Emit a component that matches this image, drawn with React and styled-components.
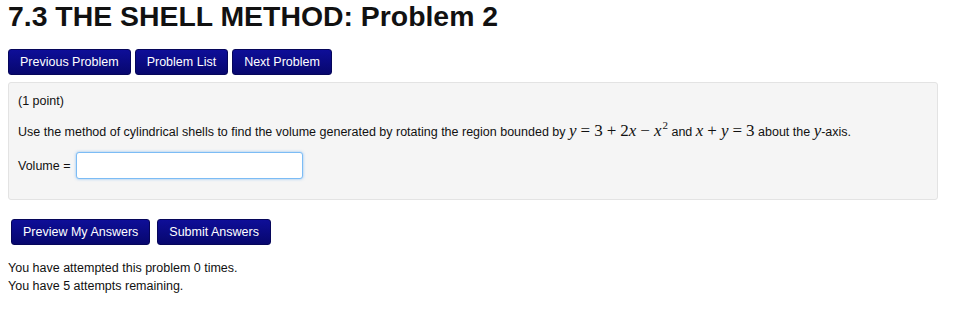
import React from 'react'
import styled, { createGlobalStyle } from 'styled-components'

const Global = createGlobalStyle`
  body {
    margin: 0;
    background: #fff;
    font-family: "Liberation Sans", Arial, sans-serif;
    color: #111;
  }
`

const Page = styled.div`
  padding: 0 15px 0 8px;
`

const Title = styled.h2`
  margin: 0;
  padding-top: 1px;
  font-size: 28.4px;
  line-height: 30px;
  font-weight: bold;
  color: #111;
`

const NavRow = styled.div`
  display: flex;
  gap: 4px;
  margin-top: 18px;
`

const Button = styled.button`
  height: 26px;
  padding: 0 11px;
  border: 1px solid #06065a;
  border-radius: 3px;
  background: linear-gradient(#0e0e98, #07076e);
  color: #fff;
  font-family: "Liberation Sans", Arial, sans-serif;
  font-size: 12.5px;
  cursor: pointer;
`

const Well = styled.div`
  margin-top: 7px;
  padding: 9px 9px 20px;
  background: #f5f5f5;
  border: 1px solid #e3e3e3;
  border-radius: 3px;
  font-size: 12.5px;
  line-height: 18px;
`

const Para = styled.p`
  margin: 0 0 ${p => p.gap || 12}px;
`

const MathVar = styled.span`
  font-family: "Liberation Serif", "Times New Roman", serif;
  font-style: ${p => (p.upright ? 'normal' : 'italic')};
  font-size: 17px;
`

const Op = styled.span`
  font-family: "Liberation Serif", "Times New Roman", serif;
  font-size: 17px;
  margin: 0 4px;
`

const Sup = styled.sup`
  font-family: "Liberation Serif", "Times New Roman", serif;
  font-size: 11px;
  vertical-align: 7px;
  line-height: 0;
  margin-left: 1px;
`

const AnswerRow = styled.div`
  display: flex;
  align-items: center;
  gap: 6px;
`

const Input = styled.input`
  width: 227px;
  height: 27px;
  box-sizing: border-box;
  border: 1px solid #7cbcf5;
  border-radius: 3px;
  box-shadow: 0 0 3px rgba(100, 170, 240, 0.7);
  background: #fff;
  outline: none;
`

const SubmitRow = styled.div`
  display: flex;
  gap: 7px;
  margin: 19px 0 0 3px;
`

const Status = styled.div`
  margin-top: 14px;
  font-size: 12.5px;
  line-height: 18px;
`

const M = ({ children }) => <MathVar>{children}</MathVar>
const N = ({ children }) => <MathVar upright>{children}</MathVar>

export default function App() {
  return (
    <Page>
      <Global />
      <Title>7.3 THE SHELL METHOD: Problem 2</Title>
      <NavRow>
        <Button>Previous Problem</Button>
        <Button>Problem List</Button>
        <Button>Next Problem</Button>
      </NavRow>
      <Well>
        <Para gap={12}>(1 point)</Para>
        <Para gap={11}>
          Use the method of cylindrical shells to find the volume generated by rotating the region bounded by{' '}
          <M>y</M><Op>=</Op><N>3</N><Op>+</Op><N>2</N><M>x</M><Op>−</Op><M>x</M>
          <Sup>2</Sup> and <M>x</M><Op>+</Op><M>y</M><Op>=</Op><N>3</N> about the <M>y</M>-axis.
        </Para>
        <AnswerRow>
          <span>Volume =</span>
          <Input />
        </AnswerRow>
      </Well>
      <SubmitRow>
        <Button>Preview My Answers</Button>
        <Button>Submit Answers</Button>
      </SubmitRow>
      <Status>
        You have attempted this problem 0 times.
        <br />
        You have 5 attempts remaining.
      </Status>
    </Page>
  )
}
